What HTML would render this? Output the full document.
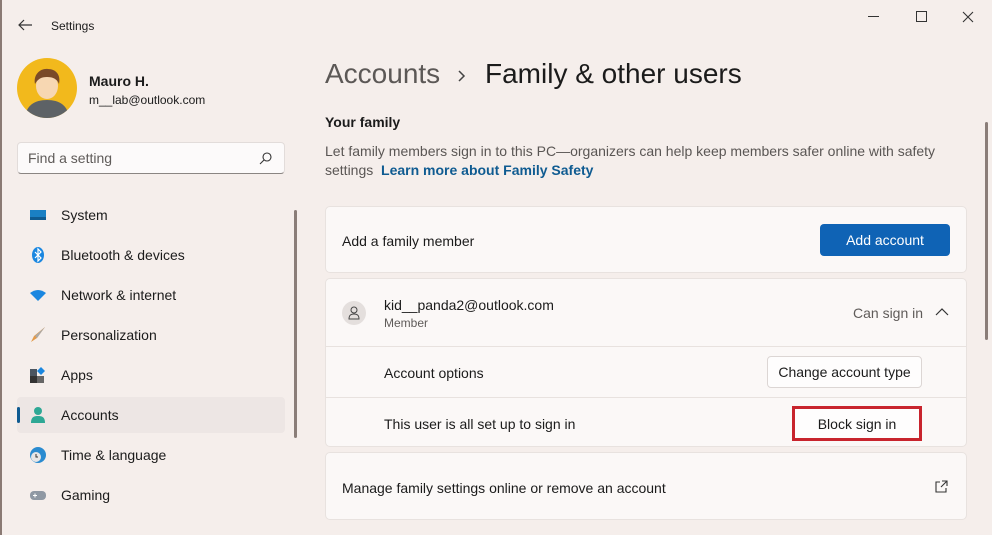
<!DOCTYPE html>
<html><head><meta charset="utf-8"><style>
*{box-sizing:border-box;margin:0;padding:0}
body{width:992px;height:535px;overflow:hidden;background:#f5eeeb;font-family:"Liberation Sans",sans-serif;color:#1b1b1b;position:relative}
.abs{position:absolute}
.t{font-size:14px}
.nav{position:absolute;left:17px;width:268px;height:36px;display:flex;align-items:center;font-size:14px}
.nav .ic{width:16px;height:16px;margin-left:13px;margin-right:15px}
.card{position:absolute;left:325px;width:642px;background:#fbf8f7;border:1px solid #e8e2df;border-radius:5px}
.btn{position:absolute;background:#fefdfd;border:1px solid #dcd6d4;border-radius:4px;font-size:14px;display:flex;align-items:center;justify-content:center}
</style></head><body>
<div class="abs" style="left:0;top:0;width:2px;height:535px;background:#8a7a74"></div>
<svg class="abs" style="left:17px;top:18px" width="16" height="14"><path d="M15 7H2M7 2L2 7l5 5" stroke="#333" stroke-width="1.2" fill="none"/></svg>
<div class="abs" style="left:51px;top:19px;font-size:12px">Settings</div>
<div class="abs" style="left:868px;top:16px;width:11px;height:1px;background:#333"></div>
<div class="abs" style="left:916px;top:11px;width:11px;height:11px;border:1px solid #333"></div>
<svg class="abs" style="left:962px;top:11px" width="12" height="12"><path d="M1 1l10 10M11 1L1 11" stroke="#333" stroke-width="1.1"/></svg>

<svg class="abs" style="left:17px;top:58px" width="60" height="60"><circle cx="30" cy="30" r="30" fill="#f2b91c"/><clipPath id="c"><circle cx="30" cy="30" r="30"/></clipPath><g clip-path="url(#c)"><path d="M8 62c0-14 9-20 22-20s22 6 22 20z" fill="#5d6266"/><ellipse cx="30" cy="28" rx="11" ry="13" fill="#f7d7b2"/><path d="M18 26c-2-10 6-16 13-15 8 0 13 6 11 15-2-5-6-7-12-7s-9 2-12 7z" fill="#7a4a28"/></g></svg>
<div class="abs" style="left:89px;top:73px;font-size:14px;font-weight:bold">Mauro H.</div>
<div class="abs" style="left:89px;top:93px;font-size:12px">m__lab@outlook.com</div>
<div class="abs" style="left:17px;top:142px;width:268px;height:32px;background:#fcfafa;border:1px solid #e2dcda;border-bottom-color:#8a8582;border-radius:4px"></div>
<div class="abs" style="left:28px;top:150px;font-size:14px;color:#5f5b59">Find a setting</div>
<svg class="abs" style="left:259px;top:151px" width="14" height="14"><circle cx="8" cy="6" r="4" stroke="#333" fill="none" stroke-width="1.1"/><path d="M5 9l-4 4" stroke="#333" stroke-width="1.1"/></svg>

<div class="nav" style="top:197px"><svg class="ic" viewBox="0 0 16 16"><rect x="0" y="3" width="17" height="10" fill="#1a80c4"/><rect x="0" y="10" width="17" height="3" fill="#0f5b91"/></svg>System</div>
<div class="nav" style="top:237px"><svg class="ic" viewBox="0 0 16 16"><ellipse cx="8" cy="8" rx="6" ry="8" fill="#1b87e0"/><path d="M5 5l6 6-3 3V2l3 3-6 6" stroke="#fff" fill="none" stroke-width="1.2"/></svg>Bluetooth &amp; devices</div>
<div class="nav" style="top:277px"><svg class="ic" viewBox="0 0 16 16"><path d="M0 6q8-6 16 0L8 14z" fill="#1b87e0"/></svg>Network &amp; internet</div>
<div class="nav" style="top:317px"><svg class="ic" viewBox="0 0 16 16"><path d="M1 15l3-6 11-9-8 11z" fill="#e39a4a"/><path d="M5 9l10-9-8 11z" fill="#aaa"/></svg>Personalization</div>
<div class="nav" style="top:357px"><svg class="ic" viewBox="0 0 16 16"><rect x="0" y="2" width="7" height="7" fill="#4b5560"/><rect x="0" y="9" width="7" height="7" fill="#333"/><rect x="7" y="9" width="7" height="7" fill="#666"/><path d="M11 0l4 4-4 4-4-4z" fill="#1b87e0"/></svg>Apps</div>
<div class="nav" style="top:397px;background:#ede6e4;border-radius:4px"><div class="abs" style="left:0;top:10px;width:3px;height:16px;background:#0f5b91;border-radius:2px"></div><svg class="ic" viewBox="0 0 16 16"><circle cx="8" cy="4" r="4" fill="#2ea895"/><path d="M1 16c0-6 3-7 7-7s7 1 7 7z" fill="#2ea895"/></svg>Accounts</div>
<div class="nav" style="top:437px"><svg class="ic" viewBox="0 0 16 16"><circle cx="8" cy="8" r="8" fill="#2a8bd0"/><circle cx="6" cy="10" r="5" fill="#e6e6e6"/><path d="M6 7v3h2" stroke="#333" fill="none"/></svg>Time &amp; language</div>
<div class="nav" style="top:477px"><svg class="ic" viewBox="0 0 16 16"><rect x="0" y="4" width="16" height="9" rx="4" fill="#8f98a3"/><path d="M3 8.5h4M5 6.5v4" stroke="#fff"/></svg>Gaming</div>
<div class="abs" style="left:294px;top:210px;width:3px;height:228px;background:#8a7d78;border-radius:2px"></div>

<div class="abs" style="left:325px;top:58px;font-size:28px;color:#5c5856">Accounts</div>
<svg class="abs" style="left:457px;top:69px" width="10" height="14"><path d="M2 2l5 5-5 5" stroke="#444" stroke-width="1.5" fill="none"/></svg>
<div class="abs" style="left:485px;top:58px;font-size:28px">Family &amp; other users</div>
<div class="abs" style="left:325px;top:114px;font-size:14px;font-weight:bold">Your family</div>
<div class="abs" style="left:325px;top:142px;font-size:14px;color:#5a5654;line-height:19px;width:630px">Let family members sign in to this PC—organizers can help keep members safer online with safety settings&nbsp; <span style="color:#0f5b91;font-weight:bold">Learn more about Family Safety</span></div>

<div class="card" style="top:206px;height:67px"><div class="abs t" style="left:16px;top:26px">Add a family member</div>
<div class="abs" style="left:494px;top:17px;width:130px;height:32px;background:#0f63b5;border-radius:4px;color:#fff;font-size:14px;display:flex;align-items:center;justify-content:center">Add account</div></div>

<div class="card" style="top:278px;height:169px">
<div class="abs" style="left:16px;top:22px;width:24px;height:24px;border-radius:50%;background:#e4dfdd"></div>
<svg class="abs" style="left:22px;top:27px" width="12" height="14"><circle cx="6" cy="4" r="3" stroke="#444" fill="none"/><path d="M1 13c0-4 2-5 5-5s5 1 5 5z" stroke="#444" fill="none"/></svg>
<div class="abs t" style="left:58px;top:18px">kid__panda2@outlook.com</div>
<div class="abs" style="left:58px;top:37px;font-size:12px;color:#5f5b59">Member</div>
<div class="abs t" style="left:527px;top:26px;color:#5f5b59">Can sign in</div>
<svg class="abs" style="left:609px;top:28px" width="14" height="10"><path d="M1 8l6-6 6 6" stroke="#333" stroke-width="1.2" fill="none"/></svg>
<div class="abs" style="left:0;top:67px;width:640px;height:1px;background:#e8e2df"></div>
<div class="abs t" style="left:58px;top:86px">Account options</div>
<div class="btn" style="left:441px;top:77px;width:155px;height:32px">Change account type</div>
<div class="abs" style="left:0;top:118px;width:640px;height:1px;background:#e8e2df"></div>
<div class="abs t" style="left:58px;top:137px">This user is all set up to sign in</div>
<div class="btn" style="left:466px;top:127px;width:130px;height:35px;border:3px solid #c8242d;border-radius:0">Block sign in</div>
</div>

<div class="card" style="top:452px;height:68px"><div class="abs t" style="left:16px;top:27px">Manage family settings online or remove an account</div>
<svg class="abs" style="left:608px;top:27px" width="14" height="14"><path d="M6 2H2v10h10V8M8 1h5v5M13 1L7 7" stroke="#333" stroke-width="1.1" fill="none"/></svg></div>
<div class="abs" style="left:985px;top:122px;width:3px;height:218px;background:#8a7d78;border-radius:2px"></div>
</body></html>
